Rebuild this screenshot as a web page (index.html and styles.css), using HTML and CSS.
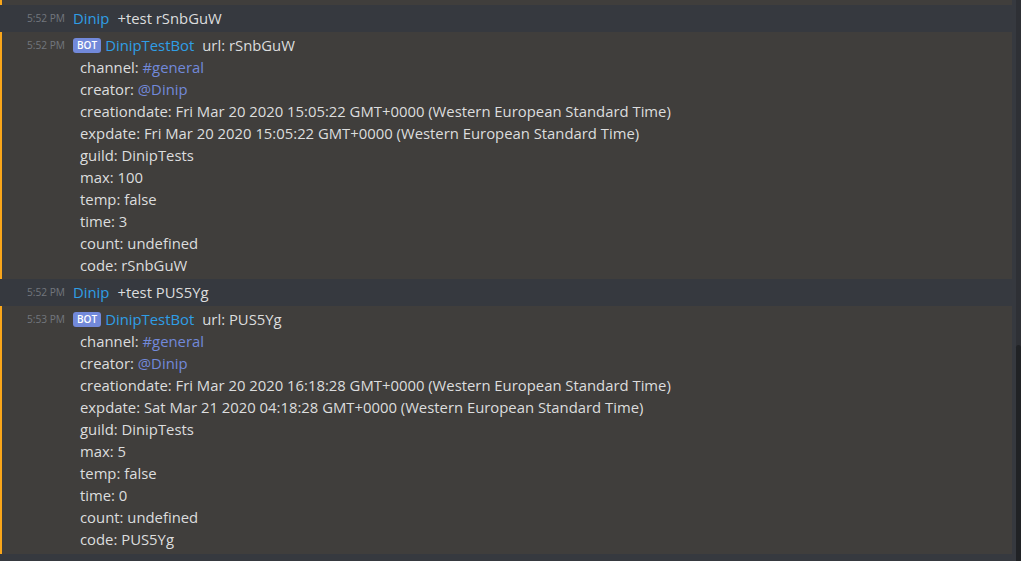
FILE: index.html
```html
<!DOCTYPE html>
<html lang="en">
<head>
    <meta charset="UTF-8">
    <title>general</title>
    <link rel="stylesheet" href="styles.css">
</head>
<body>
    <div class="chat">
        <div class="messages">
            <div class="msg mention tail"></div>

            <div class="msg">
                <div class="line">
                    <span class="time">5:52 PM</span>
                    <span class="author">Dinip</span>
                    <span class="text">+test rSnbGuW</span>
                </div>
            </div>

            <div class="msg mention">
                <div class="line">
                    <span class="time">5:52 PM</span>
                    <span class="bot-tag">BOT</span>
                    <span class="author">DinipTestBot</span>
                    <span class="text">url: rSnbGuW</span>
                </div>
                <div class="body">
                    <div>channel: <span class="ref">#general</span></div>
                    <div>creator: <span class="ref">@Dinip</span></div>
                    <div>creationdate: Fri Mar 20 2020 15:05:22 GMT+0000 (Western European Standard Time)</div>
                    <div>expdate: Fri Mar 20 2020 15:05:22 GMT+0000 (Western European Standard Time)</div>
                    <div>guild: DinipTests</div>
                    <div>max: 100</div>
                    <div>temp: false</div>
                    <div>time: 3</div>
                    <div>count: undefined</div>
                    <div>code: rSnbGuW</div>
                </div>
            </div>

            <div class="msg">
                <div class="line">
                    <span class="time">5:52 PM</span>
                    <span class="author">Dinip</span>
                    <span class="text">+test PUS5Yg</span>
                </div>
            </div>

            <div class="msg mention last">
                <div class="line">
                    <span class="time">5:53 PM</span>
                    <span class="bot-tag">BOT</span>
                    <span class="author">DinipTestBot</span>
                    <span class="text">url: PUS5Yg</span>
                </div>
                <div class="body">
                    <div>channel: <span class="ref">#general</span></div>
                    <div>creator: <span class="ref">@Dinip</span></div>
                    <div>creationdate: Fri Mar 20 2020 16:18:28 GMT+0000 (Western European Standard Time)</div>
                    <div>expdate: Sat Mar 21 2020 04:18:28 GMT+0000 (Western European Standard Time)</div>
                    <div>guild: DinipTests</div>
                    <div>max: 5</div>
                    <div>temp: false</div>
                    <div>time: 0</div>
                    <div>count: undefined</div>
                    <div>code: PUS5Yg</div>
                </div>
            </div>
        </div>
        <div class="scroll">
            <div class="scroll-thumb"></div>
        </div>
    </div>
</body>
</html>
```

FILE: styles.css
```css
body {
    margin: 0;
    padding: 0;
    background: #36393f;
    color: #dcddde;
    font-family: 'Open Sans', 'Noto Sans', sans-serif;
    font-size: 14.85px;
    overflow: hidden;
}
.chat {
    display: flex;
    height: 561px;
}
.messages {
    flex: 1;
    margin-right: 4px;
}
.msg {
    padding: 2px 0 3px;
    line-height: 22px;
}
.mention {
    background: rgba(250, 166, 26, 0.05);
    border-left: 2px solid #faa61a;
}
.mention .line {
    margin-left: -2px;
}
.last {
    padding-bottom: 4px;
}
.tail {
    height: 5px;
    padding: 0;
    box-sizing: border-box;
}
.line {
    display: flex;
    align-items: center;
    white-space: nowrap;
}
.time {
    width: 65px;
    text-align: right;
    font-size: 10.2px;
    color: #72767d;
    margin-right: 8px;
}
.author {
    color: #2f9ee6;
    font-weight: 500;
    margin-right: 8px;
}
.bot-tag {
    background: #7289da;
    color: #fff;
    font-size: 10px;
    font-weight: 600;
    line-height: 15px;
    padding: 0 4px;
    border-radius: 3px;
    margin-right: 4px;
}
.body {
    padding-left: 78px;
}
.ref {
    color: #7289da;
}
.scroll {
    width: 5px;
    background: #2e3035;
    display: flex;
    flex-direction: column;
    padding-top: 345px;
    box-sizing: border-box;
}
.scroll-thumb {
    flex: 1;
    background: #202225;
    border-radius: 3px 3px 0 0;
}
```
